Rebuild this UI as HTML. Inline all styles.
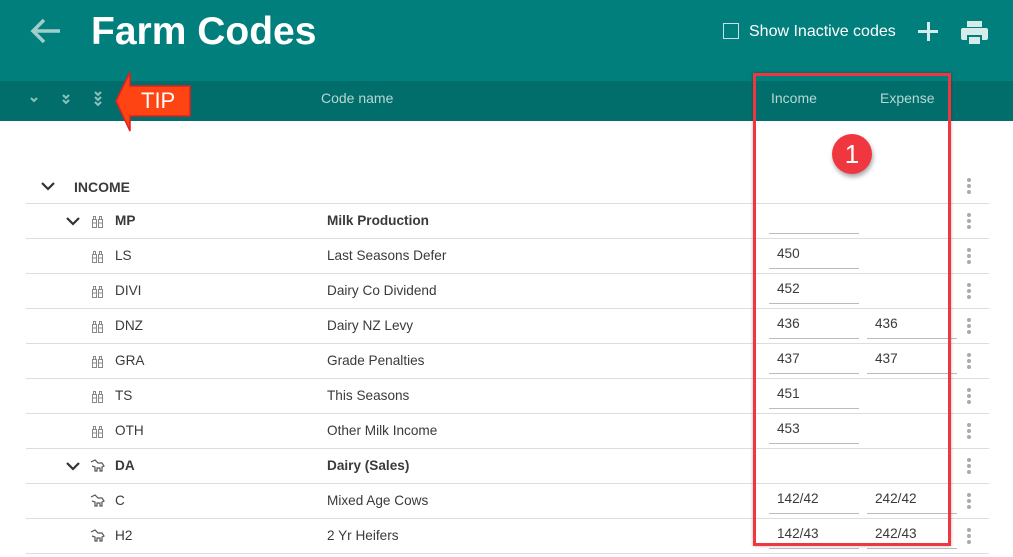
<!DOCTYPE html>
<html><head><meta charset="utf-8"><style>
*{margin:0;padding:0;box-sizing:border-box}
body{width:1013px;height:557px;overflow:hidden;background:#fff;font-family:"Liberation Sans",sans-serif;position:relative;color:#3a3a3a}
.abs{position:absolute}
.hdr{left:0;top:0;width:1013px;height:81px;background:#017f7c}
.tb{left:0;top:81px;width:1013px;height:40px;background:#026e6b}
.row{position:absolute;left:26px;width:963px;height:36px;border-bottom:1px solid #ddd}
.t{position:absolute;font-size:13.6px;line-height:16px}
.inp{position:absolute;width:90px;height:1px;background:#bbb}
.dots{position:absolute;left:967px;width:4px}
.dots i{display:block;width:4px;height:4px;border-radius:2px;background:#aaa;margin-bottom:2px}
</style></head><body>
<div class="abs hdr"></div>
<div class="abs tb"></div>
<svg class="abs" style="left:30px;top:17px" width="32" height="28" viewBox="0 0 32 28"><path d="M14 3L3 14L14 25M3 14H30" stroke="#9fcfcb" stroke-width="3.5" fill="none"/></svg>
<div class="abs" style="left:91px;top:10px;font-size:39px;font-weight:bold;color:#fff;line-height:44px">Farm Codes</div>
<div class="abs" style="left:723px;top:23px;width:16px;height:16px;border:1.5px solid #cde"></div>
<div class="abs" style="left:749px;top:23px;font-size:16px;color:#fff">Show Inactive codes</div>
<div class="abs" style="left:918px;top:30px;width:20px;height:3px;background:#d5ecea"></div>
<div class="abs" style="left:926.5px;top:22px;width:3px;height:19px;background:#d5ecea"></div>
<svg class="abs" style="left:961px;top:21px" width="27" height="25" viewBox="0 0 27 25"><rect x="6" y="0" width="15" height="6" fill="#d5ecea"/><rect x="0" y="7" width="27" height="12" rx="2" fill="#d5ecea"/><rect x="6" y="14" width="15" height="10" fill="#017f7c"/><rect x="8" y="16" width="11" height="7" fill="#d5ecea"/></svg>
<svg class="abs" style="left:28px;top:91px" width="80" height="20" viewBox="0 0 80 20"><g stroke="#8cc2bd" stroke-width="2" fill="none"><path d="M3 7l3 3 3-3"/><path d="M35 4l3 3 3-3M35 9l3 3 3-3"/><path d="M67 1l3 3 3-3M67 6l3 3 3-3M67 11l3 3 3-3"/></g></svg>
<svg class="abs" style="left:114px;top:70px" width="80" height="64" viewBox="0 0 80 64"><path d="M2 31L16 2V16H76V46H16V61Z" fill="#fe4412" stroke="#e02020" stroke-width="1.5"/></svg>
<div class="abs" style="left:141px;top:88px;font-size:22px;color:#fff">TIP</div>
<div class="abs" style="left:321px;top:90px;font-size:14px;color:#b5d8d4">Code name</div>
<div class="abs" style="left:771px;top:90px;font-size:14px;color:#b5d8d4">Income</div>
<div class="abs" style="left:880px;top:90px;font-size:14px;color:#b5d8d4">Expense</div>

<div class="row" style="top:168px"></div>
<svg class="abs" style="left:40px;top:181px" width="16" height="12"><path d="M2 2l6 6 6-6" stroke="#333" stroke-width="2.2" fill="none"/></svg>
<div class="t" style="left:74px;top:179px;font-weight:bold;font-size:14px">INCOME</div>
<div class="dots" style="top:178px"><i></i><i></i><i></i></div>

<div id="rows"></div>
<script>
var R=[["MP","Milk Production","","",1,"m"],["LS","Last Seasons Defer","450","",0,"m"],["DIVI","Dairy Co Dividend","452","",0,"m"],["DNZ","Dairy NZ Levy","436","436",0,"m"],["GRA","Grade Penalties","437","437",0,"m"],["TS","This Seasons","451","",0,"m"],["OTH","Other Milk Income","453","",0,"m"],["DA","Dairy (Sales)",null,null,1,"c"],["C","Mixed Age Cows","142/42","242/42",0,"c"],["H2","2 Yr Heifers","142/43","242/43",0,"c"]];
var h="";
R.forEach(function(r,i){var top=203+i*35,c=top+18;
h+='<div class="row" style="top:'+top+'px"></div>';
if(r[4])h+='<svg class="abs" style="left:65px;top:'+(c-5)+'px" width="16" height="12"><path d="M2 2l6 6 6-6" stroke="#333" stroke-width="2.2" fill="none"/></svg>';
if(r[5]=="m")h+='<svg class="abs" style="left:91px;top:'+(c-6)+'px" width="13" height="13" viewBox="0 0 13 13"><g stroke="#888" fill="none" stroke-width="1"><path d="M1.5 4.5h4v8h-4zM7.5 4.5h4v8h-4zM2.5 1.5h2v3h-2zM8.5 1.5h2v3h-2zM1.5 8h4M7.5 8h4"/></g></svg>';
else h+='<svg class="abs" style="left:90px;top:'+(c-7)+'px" width="15" height="14" viewBox="0 0 15 14"><path d="M1 3l4-2 3 3h4l2 3-2 1v4h-2v-3H7v3H5V8L2 7" stroke="#555" fill="none" stroke-width="1.2"/></svg>';
h+='<div class="t" style="left:115px;top:'+(c-8)+'px;'+(r[4]?'font-weight:bold':'')+'">'+r[0]+'</div>';
h+='<div class="t" style="left:327px;top:'+(c-8)+'px;'+(r[4]?'font-weight:bold':'')+'">'+r[1]+'</div>';
if(r[2]!==null){h+='<div class="inp" style="left:769px;top:'+(top+30)+'px"></div>';
if(r[2])h+='<div class="t" style="left:777px;top:'+(c-10)+'px">'+r[2]+'</div>';}
if(r[3]){h+='<div class="inp" style="left:867px;top:'+(top+30)+'px"></div><div class="t" style="left:875px;top:'+(c-10)+'px">'+r[3]+'</div>';}
h+='<div class="dots" style="top:'+(c-8)+'px"><i></i><i></i><i></i></div>';});
document.getElementById("rows").innerHTML=h;
</script>
<div class="abs" style="left:753px;top:73px;width:198px;height:473px;border:3px solid #f0373f;box-shadow:0 0 3px rgba(0,0,0,.3)"></div>
<div class="abs" style="left:832px;top:134px;width:40px;height:40px;border-radius:50%;background:#f0373f;box-shadow:1px 3px 5px rgba(0,0,0,.35);color:#fff;font-size:26px;text-align:center;line-height:40px">1</div>
</body></html>
